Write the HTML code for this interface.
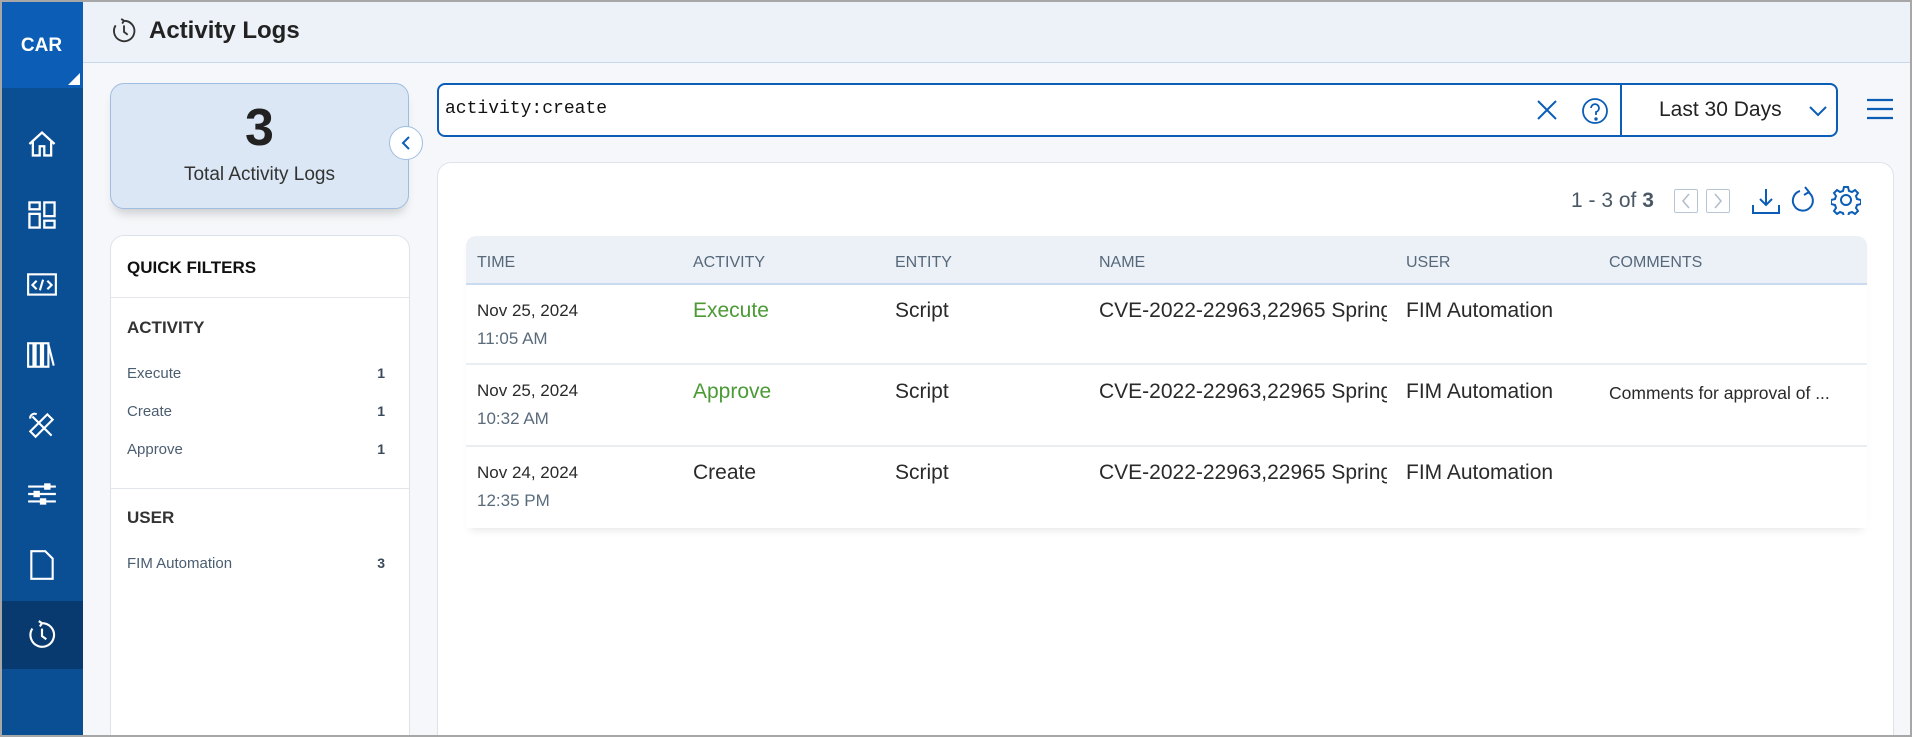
<!DOCTYPE html>
<html style="overflow:hidden"><head><meta charset="utf-8"><style>
*{box-sizing:border-box;margin:0;padding:0}
html,body{width:1912px;height:737px;overflow:hidden}
body{font-family:"Liberation Sans",sans-serif;background:#f5f7fa;color:#222}
#root{position:relative;width:1912px;height:737px;overflow:hidden}
.abs{position:absolute}
#frame{position:absolute;left:0;top:0;width:1912px;height:737px;border:2px solid #a7a7a7;pointer-events:none;z-index:10}
#side{left:0;top:0;width:83px;height:737px;background:#0a4e94}
#car{left:0;top:0;width:83px;height:88px;background:#0c5db6;color:#fff;font-weight:bold;font-size:19px;text-align:center;line-height:92px}
#car:after{content:"";position:absolute;right:3px;bottom:3px;border-left:12px solid transparent;border-bottom:12px solid #fff}
.ico{left:0;width:83px;height:70px;display:flex;align-items:center;justify-content:center}
#hdr{left:83px;top:0;right:0;height:63px;background:#edf2f9;border-bottom:1px solid #c9d8ea}
#hdr h1{position:absolute;left:66px;top:17px;font-size:24px;font-weight:bold;color:#222}
.card{background:#fff;border:1px solid #dde3ea;border-bottom:none;border-radius:14px 14px 0 0}
.lbl{font-size:15px;color:#4b5d70}
.cnt{font-size:14px;color:#3b4a5a;font-weight:bold;position:absolute;right:24px}
.hcell{position:absolute;top:18px;font-size:16px;color:#56687a}
.row{position:absolute;left:0;width:1401px;border-bottom:2px solid #e9eef3}
.c{position:absolute;font-size:21px;color:#2a2a2a}
.t1{position:absolute;left:11px;font-size:17px;color:#2a2a2a}
.t2{position:absolute;left:11px;font-size:17px;color:#5a6b7c}
</style></head><body><div id="root">
<div id="side" class="abs"></div>
<div id="car" class="abs">CAR</div>
<div class="abs" style="left:0;top:601px;width:83px;height:68px;background:#083a6f"></div>
<div class="abs ico" style="top:109px"><svg width="32" height="32" viewBox="0 0 28 28" fill="none" stroke="#fff" stroke-width="2"><path d="M3 14 14 4l11 10M6 12v12h6v-8h4v8h6V12"/></svg></div>
<div class="abs ico" style="top:180px"><svg width="32" height="32" viewBox="0 0 28 28" fill="none" stroke="#fff" stroke-width="2"><rect x="3" y="3" width="9" height="6"/><rect x="3" y="13" width="9" height="12"/><rect x="16" y="3" width="9" height="12"/><rect x="16" y="19" width="9" height="6"/></svg></div>
<div class="abs ico" style="top:250px"><svg width="32" height="26" viewBox="0 0 30 24" fill="none" stroke="#fff" stroke-width="2"><rect x="2" y="2" width="26" height="19"/><path d="M10 8l-4 4 4 4M20 8l4 4-4 4M16 7l-3 10"/></svg></div>
<div class="abs ico" style="top:320px"><svg width="32" height="30" viewBox="0 0 30 28" fill="none" stroke="#fff" stroke-width="2"><rect x="2" y="3" width="5" height="22"/><rect x="9" y="3" width="5" height="22"/><rect x="16" y="3" width="5" height="22"/><path d="M21 4l5 20"/></svg></div>
<div class="abs ico" style="top:390px"><svg width="32" height="30" viewBox="0 0 30 28" fill="none" stroke="#fff" stroke-width="2"><path d="M4 20 20 4l5 5L9 25zM6 6l18 18M4 8a4 4 0 0 1 6-4"/></svg></div>
<div class="abs ico" style="top:459px"><svg width="32" height="26" viewBox="0 0 30 24" fill="none" stroke="#fff" stroke-width="2"><path d="M2 5h26M2 12h26M2 19h26"/><rect x="18" y="3" width="4" height="4" fill="#fff"/><rect x="8" y="10" width="4" height="4" fill="#fff"/><rect x="14" y="17" width="4" height="4" fill="#fff"/></svg></div>
<div class="abs ico" style="top:530px"><svg width="28" height="32" viewBox="0 0 26 30" fill="none" stroke="#fff" stroke-width="2"><path d="M3 2h13l7 7v19H3z"/></svg></div>
<div class="abs ico" style="top:600px"><svg width="30" height="30" viewBox="0 0 28 28" fill="none" stroke="#fff" stroke-width="2"><path d="M14 3a11 11 0 1 1-9 5M14 8v7l4 3M11 1l3 2-2 3"/></svg></div>

<div id="hdr" class="abs">
<svg class="abs" style="left:28px;top:18px" width="26" height="26" viewBox="0 0 28 28" fill="none" stroke="#333" stroke-width="2"><path d="M14 3a11 11 0 1 1-9 5M14 8v7l4 3M11 1l3 2-2 3"/></svg>
<h1>Activity Logs</h1></div>

<div class="abs" style="left:110px;top:83px;width:299px;height:126px;background:#dbe7f4;border:1px solid #9fbde0;border-radius:14px;box-shadow:0 8px 10px -4px rgba(0,0,0,.18);text-align:center">
<div style="font-size:52px;font-weight:bold;color:#222;margin-top:16px;line-height:56px">3</div>
<div style="font-size:19px;color:#333;margin-top:8px">Total Activity Logs</div></div>
<div class="abs" style="left:389px;top:126px;width:34px;height:34px;border-radius:50%;background:#fff;border:1px solid #9fbde0;display:flex;align-items:center;justify-content:center"><svg width="12" height="14" viewBox="0 0 12 14" fill="none" stroke="#0c5db6" stroke-width="2"><path d="M9 1 3 7l6 6"/></svg></div>

<div class="abs card" style="left:110px;top:235px;width:300px;height:502px">
<div class="abs" style="left:16px;top:22px;font-size:17px;font-weight:bold;color:#111">QUICK FILTERS</div>
<div class="abs" style="left:0;top:61px;width:298px;border-top:1px solid #e2e6eb"></div>
<div class="abs" style="left:16px;top:82px;font-size:17px;font-weight:bold;color:#333">ACTIVITY</div>
<div class="abs lbl" style="left:16px;top:129px">Execute</div><div class="cnt" style="top:129px">1</div>
<div class="abs lbl" style="left:16px;top:167px">Create</div><div class="cnt" style="top:167px">1</div>
<div class="abs lbl" style="left:16px;top:205px">Approve</div><div class="cnt" style="top:205px">1</div>
<div class="abs" style="left:0;top:252px;width:298px;border-top:1px solid #e2e6eb"></div>
<div class="abs" style="left:16px;top:272px;font-size:17px;font-weight:bold;color:#333">USER</div>
<div class="abs lbl" style="left:16px;top:319px">FIM Automation</div><div class="cnt" style="top:319px">3</div>
</div>

<div class="abs" style="left:437px;top:83px;width:1401px;height:54px;background:#fff;border:2px solid #0c5db6;border-radius:8px">
<div class="abs" style="left:6px;top:14px;font-family:'Liberation Mono',monospace;font-size:18px;color:#111">activity:create</div>
<svg class="abs" style="left:1097px;top:14px" width="22" height="22" viewBox="0 0 22 22" stroke="#0c5db6" stroke-width="2"><path d="M2 2l18 18M20 2 2 20"/></svg>
<svg class="abs" style="left:1142px;top:12px" width="28" height="28" viewBox="0 0 28 28" fill="none" stroke="#0c5db6" stroke-width="1.8"><circle cx="14" cy="14" r="12"/><path d="M10 11a4 4 0 1 1 5 4v3"/><circle cx="15" cy="22" r=".8" fill="#0c5db6"/></svg>
<div class="abs" style="left:1181px;top:-2px;width:2px;height:54px;background:#0c5db6"></div>
<div class="abs" style="left:1220px;top:13px;font-size:21px;color:#222">Last 30 Days</div>
<svg class="abs" style="left:1370px;top:20px" width="18" height="12" viewBox="0 0 18 12" fill="none" stroke="#0c5db6" stroke-width="2"><path d="M1 2l8 8 8-8"/></svg>
</div>
<svg class="abs" style="left:1867px;top:98px" width="26" height="22" viewBox="0 0 26 22" stroke="#0c5db6" stroke-width="2.2"><path d="M0 2h26M0 11h26M0 20h26"/></svg>

<div class="abs card" style="left:437px;top:162px;width:1457px;height:575px">
<div class="abs" style="left:1133px;top:26px;font-size:21px;color:#4a5866">1 - 3 of <b>3</b></div>
<div class="abs" style="left:1236px;top:26px;width:24px;height:24px;border:1px solid #b8c6d4;border-radius:2px"><svg width="22" height="22" viewBox="0 0 22 22" fill="none" stroke="#b0bcc8" stroke-width="1.5"><path d="M14 4 8 11l6 7"/></svg></div>
<div class="abs" style="left:1268px;top:26px;width:24px;height:24px;border:1px solid #b8c6d4;border-radius:2px"><svg width="22" height="22" viewBox="0 0 22 22" fill="none" stroke="#b0bcc8" stroke-width="1.5"><path d="M8 4l6 7-6 7"/></svg></div>
<svg class="abs" style="left:1313px;top:24px" width="30" height="28" viewBox="0 0 30 28" fill="none" stroke="#0c5db6" stroke-width="2"><path d="M15 2v16M9 12l6 6 6-6M2 18v8h26v-8"/></svg>
<svg class="abs" style="left:1352px;top:22px" width="28" height="30" viewBox="0 0 28 30" fill="none" stroke="#0c5db6" stroke-width="2"><path d="M18 7a10 10 0 1 1-8-1M15 2l4 5-5 3"/></svg>
<svg class="abs" style="left:1393px;top:22px" width="30" height="30" viewBox="0 0 30 30" fill="none" stroke="#0c5db6" stroke-width="2"><circle cx="15" cy="15" r="5"/><path d="M13 2h4l1 4 3 1 3-2 3 3-2 3 1 3 4 1v4l-4 1-1 3 2 3-3 3-3-2-3 1-1 4h-4l-1-4-3-1-3 2-3-3 2-3-1-3-4-1v-4l4-1 1-3-2-3 3-3 3 2 3-1z"/></svg>

<div class="abs" style="left:28px;top:73px;width:1401px;height:292px;box-shadow:0 6px 8px -4px rgba(0,0,0,.1)">
<div class="abs" style="left:0;top:0;width:1401px;height:49px;background:#ecf1f7;border-radius:10px 10px 0 0;border-bottom:2px solid #c8dbef">
<div class="hcell" style="left:11px">TIME</div><div class="hcell" style="left:227px">ACTIVITY</div><div class="hcell" style="left:429px">ENTITY</div><div class="hcell" style="left:633px">NAME</div><div class="hcell" style="left:940px">USER</div><div class="hcell" style="left:1143px">COMMENTS</div></div>
<div class="row" style="top:49px;height:80px;background:#fff">
<div class="t1" style="top:16px">Nov 25, 2024</div><div class="t2" style="top:44px">11:05 AM</div>
<div class="c" style="left:227px;top:14px;color:#4b9a36">Execute</div><div class="c" style="left:429px;top:14px">Script</div><div class="c" style="left:633px;top:14px;width:288px;overflow:hidden;white-space:nowrap">CVE-2022-22963,22965 Spring</div><div class="c" style="left:940px;top:14px">FIM Automation</div></div>
<div class="row" style="top:129px;height:82px;background:#fff">
<div class="t1" style="top:16px">Nov 25, 2024</div><div class="t2" style="top:44px">10:32 AM</div>
<div class="c" style="left:227px;top:15px;color:#4b9a36">Approve</div><div class="c" style="left:429px;top:15px">Script</div><div class="c" style="left:633px;top:15px;width:288px;overflow:hidden;white-space:nowrap">CVE-2022-22963,22965 Spring</div><div class="c" style="left:940px;top:15px">FIM Automation</div><div class="c" style="left:1143px;top:18px;font-size:17.5px">Comments for approval of ...</div></div>
<div class="row" style="top:211px;height:81px;background:#fff;border-bottom:none">
<div class="t1" style="top:16px">Nov 24, 2024</div><div class="t2" style="top:44px">12:35 PM</div>
<div class="c" style="left:227px;top:14px">Create</div><div class="c" style="left:429px;top:14px">Script</div><div class="c" style="left:633px;top:14px;width:288px;overflow:hidden;white-space:nowrap">CVE-2022-22963,22965 Spring</div><div class="c" style="left:940px;top:14px">FIM Automation</div></div>
</div>
</div>
<div id="frame"></div>
</div></body></html>
